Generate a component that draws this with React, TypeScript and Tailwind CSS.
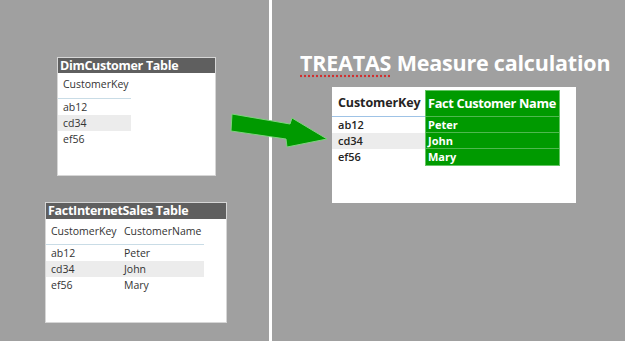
import React from 'react';

const font = { fontFamily: '"Open Sans", "Liberation Sans", sans-serif' };

const dimRows = ['ab12', 'cd34', 'ef56'];
const factRows = [
  ['ab12', 'Peter'],
  ['cd34', 'John'],
  ['ef56', 'Mary'],
];

const Arrow = () => (
  <svg className="absolute left-[228px] top-[110px]" width="104" height="42" viewBox="0 0 104 42">
    <polygon
      points="4,4 62,14 64,8 99,29 59,37 58,29 3,21"
      fill="#009a00"
      stroke="#7fd27f"
      strokeWidth="1"
      strokeLinejoin="miter"
    />
  </svg>
);

const DimCustomerCard = () => (
  <div className="ml-[57px] mt-[57px] w-[159px] h-[119px] bg-white border border-[#d6d6d6]">
    <div className="h-[15px] bg-[#5f5f5f] text-white text-[12.5px] font-bold leading-[15px] pl-[2px] tracking-[-0.3px] whitespace-nowrap">
      DimCustomer Table
    </div>
    <div className="w-[73px] text-[10.5px] text-[#333]">
      <div className="h-[26px] pl-[5px] pt-[4px] border-b border-[#c9dce6]">CustomerKey</div>
      {dimRows.map((r, i) => (
        <div key={r} className={`h-[16px] leading-[16px] pl-[5px] ${i === 1 ? 'bg-[#ececec]' : ''}`}>
          {r}
        </div>
      ))}
    </div>
  </div>
);

const FactSalesCard = () => (
  <div className="ml-[45px] mt-[26px] w-[182px] h-[121px] bg-white border border-[#d6d6d6]">
    <div className="h-[16px] bg-[#5f5f5f] text-white text-[12.5px] font-bold leading-[16px] pl-[2px] tracking-[-0.3px] whitespace-nowrap">
      FactInternetSales Table
    </div>
    <div className="w-[158px] text-[10.5px] text-[#333]">
      <div className="flex h-[26px] pl-[5px] pt-[5px] border-b border-[#c9dce6] whitespace-nowrap">
        <span className="w-[73px]">CustomerKey</span>
        <span>CustomerName</span>
      </div>
      {factRows.map(([k, n], i) => (
        <div key={k} className={`flex h-[16px] leading-[16px] pl-[5px] ${i === 1 ? 'bg-[#ececec]' : ''}`}>
          <span className="w-[73px]">{k}</span>
          <span>{n}</span>
        </div>
      ))}
    </div>
  </div>
);

const ResultCard = () => (
  <div className="ml-[60px] mt-[9px] w-[244px] h-[116px] bg-white pt-[3px]">
    <div className="flex">
      <div className="w-[93px] text-[#252423]">
        <div className="h-[27px] pl-[6px] pt-[4px] text-[12.5px] font-bold tracking-[-0.1px] whitespace-nowrap border-b border-[#9fc3e6]">
          CustomerKey
        </div>
        {dimRows.map((r, i) => (
          <div key={r} className={`h-[16px] leading-[16px] pl-[6px] text-[11px] font-semibold ${i === 1 ? 'bg-[#ececec]' : ''}`}>
            {r}
          </div>
        ))}
      </div>
      <div className="w-[135px] bg-[#009a00] text-white font-bold border border-[#66c566]">
        <div className="h-[26px] pl-[2px] pt-[3px] text-[12.8px] tracking-[-0.35px] whitespace-nowrap border-b border-[#4fb84f]">
          Fact Customer Name
        </div>
        {factRows.map(([k, n], i) => (
          <div key={k} className={`h-[16px] leading-[16px] pl-[2px] text-[11px] ${i < 2 ? 'border-b border-[#4fb84f]' : ''}`}>
            {n}
          </div>
        ))}
      </div>
    </div>
  </div>
);

export default function App() {
  return (
    <div className="relative w-[625px] h-[341px] bg-[#a0a0a0] flex overflow-hidden" style={font}>
      <div className="w-[269px] flex flex-col">
        <DimCustomerCard />
        <FactSalesCard />
      </div>
      <div className="w-[3px] bg-white" />
      <div className="flex-1 flex flex-col">
        <h1 className="mt-[48px] pl-[28px] text-white text-[21.5px] font-bold leading-[30px] tracking-[-0.2px] whitespace-nowrap">
          <span className="underline decoration-dotted decoration-[#d03030] underline-offset-[4px]">TREATAS</span> Measure calculation
        </h1>
        <ResultCard />
      </div>
      <Arrow />
    </div>
  );
}
